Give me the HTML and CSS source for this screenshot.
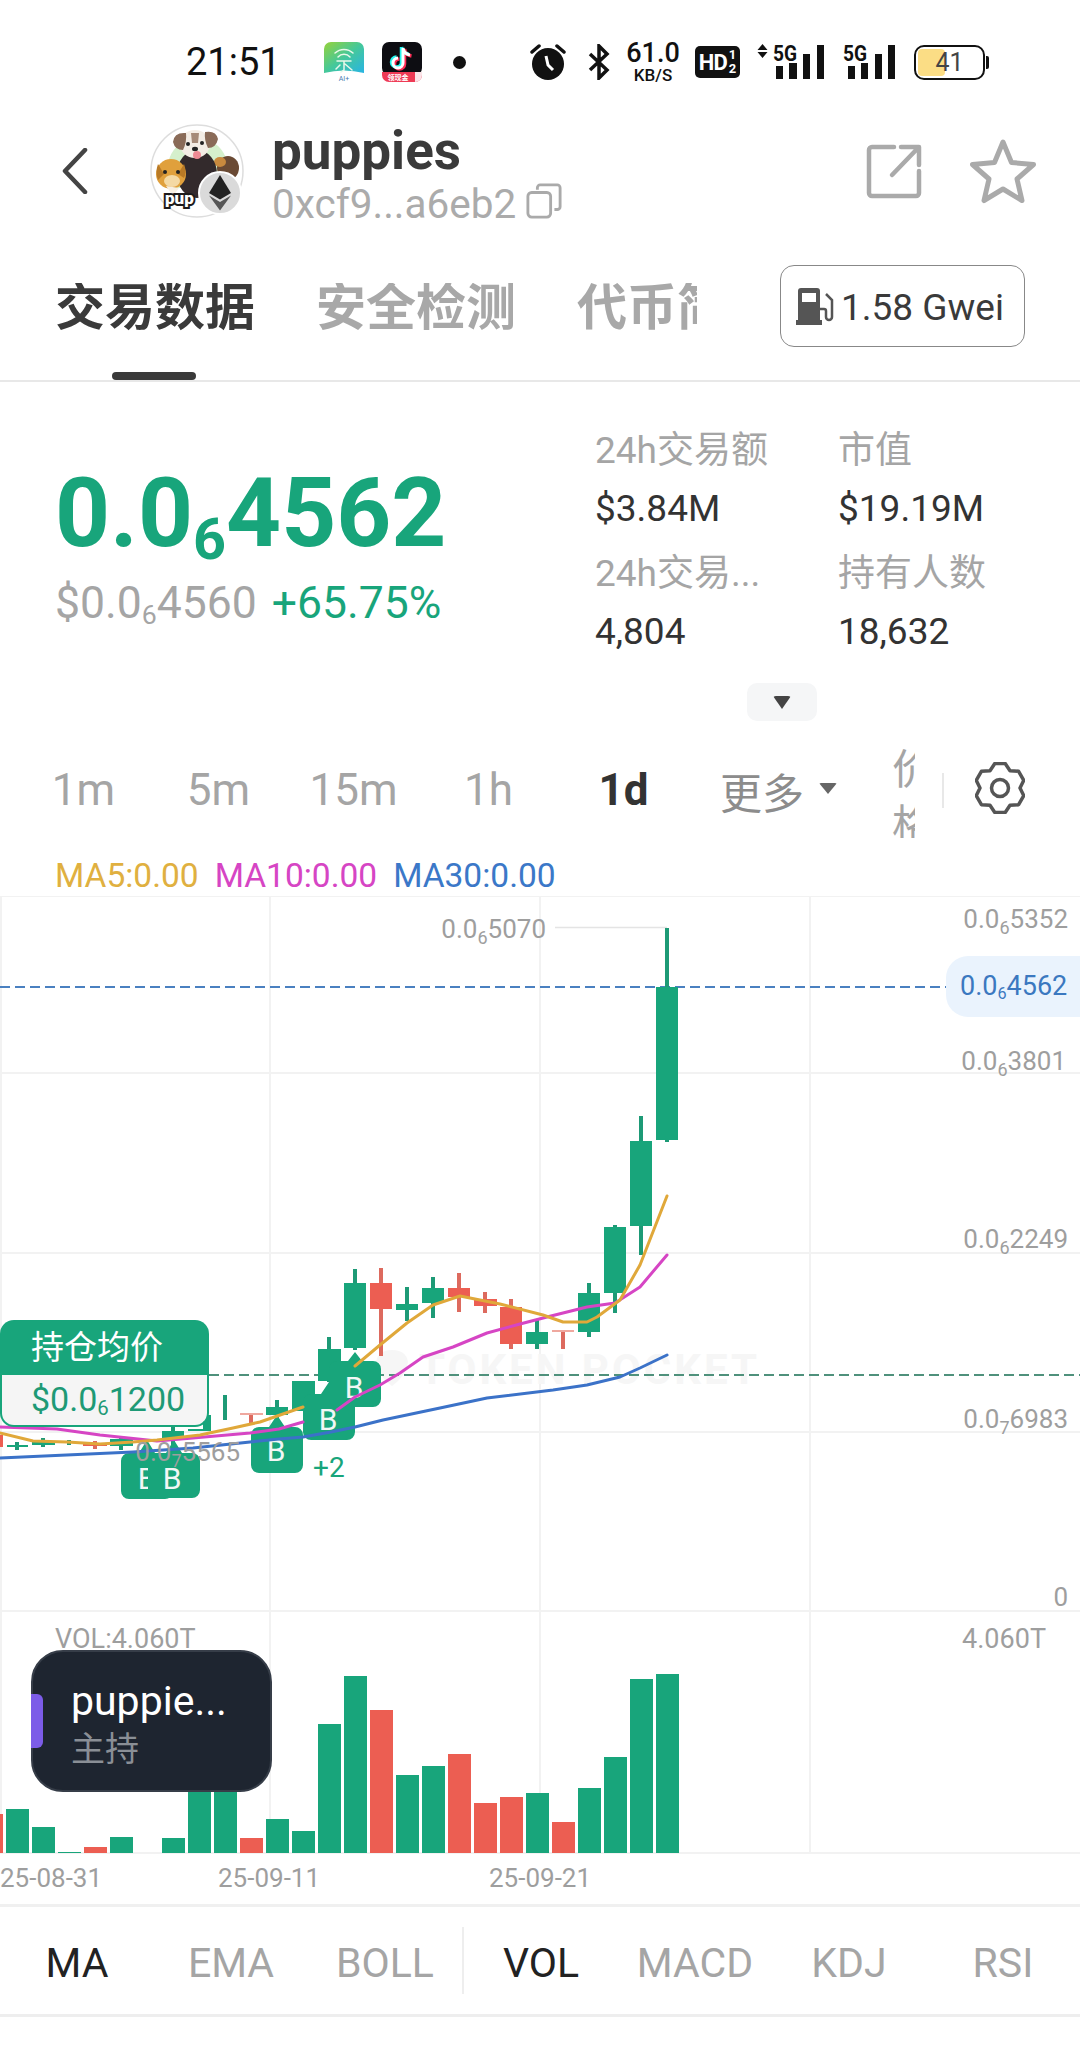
FILE: index.html
```html
<!DOCTYPE html>
<html lang="zh-CN">

<head>
    <meta charset="UTF-8">
    <meta name="viewport" content="width=device-width, initial-scale=1.0">
    <title>puppies</title>
    <link rel="stylesheet" href="styles.css">
</head>

<body>
    <!-- Status bar -->
    <div class="status-bar">
        <span class="clock">21:51</span>
        <svg class="app-icon app-one" viewBox="0 0 40 40">
            <defs>
                <linearGradient id="appGrad" x1="0" y1="0" x2="1" y2="1">
                    <stop offset="0" stop-color="#96d23a" />
                    <stop offset="0.5" stop-color="#45c89a" />
                    <stop offset="1" stop-color="#28b4e4" />
                </linearGradient>
            </defs>
            <path d="M7 0h26a7 7 0 0 1 7 7v24q-20 -5 -40 0V7a7 7 0 0 1 7 -7z" fill="url(#appGrad)" />
            <path d="M11 11a13 13 0 0 1 18 0M14 15a8 8 0 0 1 12 0M13 19h14M20 19v9l-3 2M16 23l-4 4M21 22l7 6" fill="none" stroke="#e9f8ea" stroke-width="1.500" stroke-linecap="round" />
            <text class="app-tag" x="20" y="38.500">AI+</text>
        </svg>
        <svg class="app-icon app-two" viewBox="0 0 40 40">
            <rect width="40" height="33" rx="7" fill="#0d0d12" />
            <path d="M0 30h40v3a7 7 0 0 1 -7 7H7a7 7 0 0 1 -7 -7z" fill="#ee3a55" />
            <path d="M33 30h7v3a7 7 0 0 1 -7 7z" fill="#fbe4e8" />
            <text class="app-label" x="16" y="38">领现金</text>
            <path d="M21 6v15a5 5 0 1 1 -5 -5M21 6q1 6 7 7" fill="none" stroke="#fe2c55" stroke-width="3.500" transform="translate(1.500 1)" />
            <path d="M21 6v15a5 5 0 1 1 -5 -5M21 6q1 6 7 7" fill="none" stroke="#25f4ee" stroke-width="3.500" transform="translate(-1.500 -1)" />
            <path d="M21 6v15a5 5 0 1 1 -5 -5M21 6q1 6 7 7" fill="none" stroke="#fff" stroke-width="3" />
        </svg>
        <span class="status-dot"></span>
        <svg class="sys-icon alarm" viewBox="0 0 36 38">
            <circle cx="18" cy="21" r="16" fill="#111" />
            <path d="M2 9l7 -6M34 9l-7 -6" stroke="#111" stroke-width="3.500" stroke-linecap="round" />
            <path d="M16 13l2 9l5 5" fill="none" stroke="#fff" stroke-width="3" />
        </svg>
        <svg class="sys-icon bluetooth" viewBox="0 0 24 36">
            <path d="M3 10l17 16l-8 8V2l8 8L3 26" fill="none" stroke="#111" stroke-width="3.500" />
        </svg>
        <div class="net-speed">
            <span class="net-value">61.0</span>
            <span class="net-unit">KB/S</span>
        </div>
        <div class="hd-badge">HD<span class="hd-sub">1<br>2</span></div>
        <svg class="signal signal-one" viewBox="0 0 67 38">
            <path d="M5.500 1l5 6h-10zM5.500 15l5 -6h-10z" fill="#111" />
            <text class="signal-label" x="16" y="18" textLength="24" lengthAdjust="spacingAndGlyphs">5G</text>
            <path d="M19 23h7v13h-7zM32 20h8v16h-8zM46 11h7v25h-7zM60 2h7v34h-7z" fill="#111" />
        </svg>
        <svg class="signal signal-two" viewBox="0 0 52 38">
            <text class="signal-label" x="0" y="18" textLength="24" lengthAdjust="spacingAndGlyphs">5G</text>
            <path d="M5 23h7v13H5zM18 20h7v16h-7zM32 11h7v25h-7zM45 2h7v34h-7z" fill="#111" />
        </svg>
        <div class="battery">
            <div class="battery-body">
                <span class="battery-fill"></span>
                <span class="battery-text">41</span>
            </div>
            <span class="battery-nub"></span>
        </div>
    </div>

    <!-- Token header -->
    <header class="token-head">
        <svg class="back-icon" viewBox="0 0 26 46">
            <path d="M23 2L3 23l20 21" fill="none" stroke="#444" stroke-width="4.500" stroke-linecap="round" stroke-linejoin="round" />
        </svg>
        <svg class="avatar" viewBox="0 0 94 94">
            <circle cx="47" cy="47" r="46" fill="#fff" stroke="#ddd" stroke-width="1.500" />
            <path d="M18 40a30 30 0 0 1 58 -6l-4 30H20z" fill="#d5f0cc" />
            <ellipse cx="78" cy="44" rx="11" ry="12" fill="#6a4a34" />
            <ellipse cx="70" cy="38" rx="6" ry="5" fill="#c98a3e" />
            <ellipse cx="47" cy="50" rx="20" ry="24" fill="#332a2c" />
            <ellipse cx="45" cy="20" rx="15" ry="14" fill="#f3ece4" />
            <path d="M36 9q-12 -1 -13 9q2 8 10 8q4 -8 3 -17zM55 8q11 -2 13 7q-2 9 -10 9q-4 -8 -3 -16z" fill="#8a6b58" />
            <path d="M41 9h8l-1 10h-6z" fill="#a58a78" />
            <circle cx="38" cy="20" r="2" fill="#222" />
            <circle cx="52" cy="19" r="2" fill="#222" />
            <ellipse cx="45" cy="25" rx="3" ry="2.200" fill="#222" />
            <ellipse cx="47" cy="31" rx="4" ry="4" fill="#ee8a94" />
            <ellipse cx="21" cy="50" rx="15" ry="15" fill="#e0a03c" />
            <path d="M8 40q-3 8 0 16l6 -6zM34 40q3 8 0 14l-6 -4z" fill="#b97a26" />
            <ellipse cx="22" cy="57" rx="8" ry="6" fill="#f4d9a4" />
            <circle cx="15" cy="48" r="2" fill="#222" />
            <circle cx="28" cy="48" r="2" fill="#222" />
            <path d="M16 62l7 10l6 -8z" fill="#f7efe2" />
            <text class="avatar-text" x="15" y="80">pup</text>
            <circle cx="70" cy="69" r="21" fill="#dadada" stroke="#fff" stroke-width="2" />
            <path d="M70 51l11 18l-11 6.500l-11 -6.500z" fill="#222" />
            <path d="M70 78l11 -6.500l-11 15l-11 -15z" fill="#555" />
        </svg>
        <div class="token-name">
            <h1>puppies</h1>
            <div class="token-address">
                <span>0xcf9...a6eb2</span>
                <svg class="copy-icon" viewBox="0 0 38 38">
                    <rect x="2" y="10" width="24" height="26" rx="4" fill="#fff" stroke="#aaa" stroke-width="3" />
                    <path d="M12 7V5a3 3 0 0 1 3 -3h18a3 3 0 0 1 3 3v20a3 3 0 0 1 -3 3h-3" fill="none" stroke="#aaa" stroke-width="3" />
                </svg>
            </div>
        </div>
        <svg class="share-icon" viewBox="0 0 56 56">
            <path d="M28 4H6a3 3 0 0 0 -3 3v43a3 3 0 0 0 3 3h44a3 3 0 0 0 3 -3V28M26 32L52 5M35 4h18v18" fill="none" stroke="#aaa" stroke-width="4.500" stroke-linecap="round" stroke-linejoin="round" />
        </svg>
        <svg class="star-icon" viewBox="0 0 66 66">
            <path d="M33 4l8.500 20.500l22 2l-16.500 14.500l5 21.500l-19 -11.500l-19 11.500l5 -21.500L2.500 26.500l22 -2z" fill="none" stroke="#aaa" stroke-width="5" stroke-linejoin="round" />
        </svg>
    </header>

    <!-- Tabs -->
    <nav class="tabs">
        <div class="tab-list">
            <span class="tab tab-active">交易数据</span>
            <span class="tab">安全检测</span>
            <span class="tab">代币简介</span>
        </div>
        <div class="gas-button">
            <svg class="gas-icon" viewBox="0 0 38 38">
                <path d="M2 4a3 3 0 0 1 3 -3h16a3 3 0 0 1 3 3v29H2z" fill="#555" />
                <rect x="6" y="6" width="14" height="9" fill="#fff" />
                <rect y="33" width="26" height="5" fill="#555" />
                <path d="M24 22h4a2 2 0 0 1 2 2v6a3 3 0 0 0 6 0V13l-6 -6" fill="none" stroke="#555" stroke-width="2.500" />
            </svg>
            <span class="gas-text">1.58 Gwei</span>
        </div>
        <span class="tab-indicator"></span>
    </nav>

    <!-- Price and stats -->
    <section class="market">
        <div class="price-block">
            <div class="price">0.0<sub>6</sub>4562</div>
            <div class="price-sub">
                <span class="price-usd">$0.0<sub>6</sub>4560</span>
                <span class="price-change">+65.75%</span>
            </div>
        </div>
        <div class="stats">
            <div class="stat">
                <span class="stat-label">24h交易额</span>
                <span class="stat-value">$3.84M</span>
            </div>
            <div class="stat">
                <span class="stat-label">市值</span>
                <span class="stat-value">$19.19M</span>
            </div>
            <div class="stat">
                <span class="stat-label">24h交易...</span>
                <span class="stat-value">4,804</span>
            </div>
            <div class="stat">
                <span class="stat-label">持有人数</span>
                <span class="stat-value">18,632</span>
            </div>
        </div>
    </section>
    <div class="expand-pill"><span class="arrow-down"></span></div>

    <!-- Period selector -->
    <div class="periods">
        <div class="period-list">
            <span class="period">1m</span>
            <span class="period">5m</span>
            <span class="period">15m</span>
            <span class="period">1h</span>
            <span class="period period-active">1d</span>
        </div>
        <div class="period-more">更多<span class="arrow-small"></span></div>
        <div class="period-clip">价格</div>
        <span class="period-divider"></span>
        <svg class="gear-icon" viewBox="0 0 50 52">
            <path d="M19.800 1.500H30.200L35 8.700L43.600 9.300L48.800 18.300L45 26L48.800 33.700L43.600 42.700L35 43.300L30.200 50.500H19.800L15 43.300L6.400 42.700L1.200 33.700L5 26L1.200 18.300L6.400 9.300L15 8.700z" fill="none" stroke="#555" stroke-width="3.500" stroke-linejoin="round" />
            <circle cx="25" cy="26" r="8.500" fill="none" stroke="#555" stroke-width="3.500" />
        </svg>
    </div>

    <div class="ma-legend">
        <span class="ma5">MA5:0.00</span>
        <span class="ma10">MA10:0.00</span>
        <span class="ma30">MA30:0.00</span>
    </div>

    <!-- Chart -->
    <section class="chart">
        <svg class="chart-canvas" viewBox="0 896 1080 1009" width="1080" height="1009">
            <!-- grid -->
            <path class="grid" d="M0 896H1080M0 1073H1080M0 1253H1080M0 1432H1080M0 1611H1080M0 1853H1080M1 896V1853M270 896V1853M540 896V1853M810 896V1853" />
            <path class="watermark-mark" d="M392 1350q14 0 16 12q-2 14 -16 24q-14 -10 -16 -24q2 -12 16 -12z" />
            <text class="watermark" x="419" y="1384">TOKEN POCKET</text>

            <!-- volume bars -->
            <path class="bar-up" d="M656 1674h23v179h-23zM630 1679h23v174h-23zM604 1757h23v96h-23zM578 1788h23v65h-23zM526 1793h23v60h-23zM422 1766h23v87h-23zM396 1775h23v78h-23zM344 1676h23v177h-23zM318 1724h23v129h-23zM292 1831h23v22h-23zM266 1819h23v34h-23zM214 1700h23v153h-23zM188 1700h23v153h-23zM162 1838h23v15h-23zM110 1837h23v16h-23zM58 1852h23v1h-23zM32 1827h23v26h-23zM6 1809h23v44h-23z" />
            <path class="bar-down" d="M552 1822h23v31h-23zM500 1797h23v56h-23zM474 1803h23v50h-23zM448 1754h23v99h-23zM370 1710h23v143h-23zM240 1838h23v15h-23zM84 1847h23v6h-23zM-20 1814h23v39h-23z" />

            <!-- reference lines -->
            <path class="leader" d="M555 927.500H667" />
            <path class="last-line" d="M0 987H946" />
            <path class="avg-line" d="M209 1375H1080" />

            <!-- candles -->
            <path class="wick-up" d="M667 928V1142M641 1116V1255M615 1225V1313M589 1283V1337M537 1319V1349M433 1277V1318M407 1287V1321M355 1269V1350M329 1337V1382M277 1400V1425M225 1395V1420M173 1425V1445M121 1436V1450M69 1440V1445M43 1438V1447M17 1442V1450" />
            <path class="body-up" d="M656 987h22v153h-22zM630 1141h22v85h-22zM604 1227h22v66h-22zM578 1293h22v39h-22zM526 1332h22v12h-22zM422 1288h22v15h-22zM396 1304h22v6h-22zM344 1283h22v65h-22zM318 1349h23v32h-23zM292 1381h23v30h-23zM266 1407h22v8h-22zM188 1429h23v2h-23zM203 1415h8v15h-8zM162 1431h22v7h-22zM110 1439h23v7h-23zM32 1442h23v3h-23zM7 1445h21v2h-21z" />
            <path class="wick-down" d="M563 1331V1349M511 1299V1349M485 1292V1313M459 1273V1312M381 1268V1356M251 1413V1423M95 1441V1449" />
            <path class="body-down" d="M500 1307h22v37h-22zM474 1299h23v7h-23zM448 1288h22v9h-22zM370 1283h22v26h-22zM83 1443h24v3h-24zM-10 1435h13v12h-13z" />
            <path class="doji-down" d="M552 1331H574M240 1414H263" />

            <!-- trade markers -->
            <path class="marker" d="M147 1440l8 13h10a8 8 0 0 1 8 8v30a8 8 0 0 1 -8 8H129a8 8 0 0 1 -8 -8v-30a8 8 0 0 1 8 -8h10z" />
            <text class="marker-text" x="147" y="1489">B</text>
            <path class="marker" d="M174 1440l8 13h10a8 8 0 0 1 8 8v29a8 8 0 0 1 -8 8H156a8 8 0 0 1 -8 -8v-29a8 8 0 0 1 8 -8h10z" />
            <text class="marker-text" x="172" y="1489">B</text>
            <path class="marker" d="M277 1415l8 12h10a8 8 0 0 1 8 8v30a8 8 0 0 1 -8 8H259a8 8 0 0 1 -8 -8v-30a8 8 0 0 1 8 -8h10z" />
            <text class="marker-text" x="276" y="1461">B</text>
            <path class="marker" d="M329 1382l8 12h10a8 8 0 0 1 8 8v30a8 8 0 0 1 -8 8H311a8 8 0 0 1 -8 -8v-30a8 8 0 0 1 8 -8h10z" />
            <text class="marker-text" x="328" y="1430">B</text>
            <path class="marker" d="M355 1352l7 9h11a8 8 0 0 1 8 8v30a8 8 0 0 1 -8 8H337a8 8 0 0 1 -8 -8v-30a8 8 0 0 1 8 -8h11z" />
            <text class="marker-text" x="354" y="1398">B</text>
            <text class="plus-more" x="313" y="1477">+2</text>

            <!-- moving averages -->
            <path class="line-ma30" d="M0 1458L133 1452L193 1448L250 1442L279 1439L303 1437L331 1432L355 1427L383 1420L440 1408L487 1398L553 1390L587 1385L620 1377L640 1368L667 1355" />
            <path class="line-ma10" d="M0 1427L57 1429L100 1435L157 1441L193 1438L250 1433L279 1429L303 1422M337 1410L355 1397L380 1385L400 1373L423 1357L453 1347L487 1333L520 1324L547 1317L587 1307L615 1303L640 1287L667 1255" />
            <path class="line-ma5" d="M0 1433L33 1441L67 1442L100 1444L133 1442L157 1440L200 1435L233 1428L260 1422L303 1407M355 1366L380 1345L407 1323L433 1305L460 1296L500 1304L543 1315L563 1322L587 1322L597 1317L620 1300L640 1265L667 1196" />

            <!-- price labels -->
            <text class="axis-label" x="1068" y="928">0.0<tspan class="axis-sub" dy="6">6</tspan><tspan dy="-6">5352</tspan></text>
            <text class="axis-label" x="1066" y="1070">0.0<tspan class="axis-sub" dy="6">6</tspan><tspan dy="-6">3801</tspan></text>
            <text class="axis-label" x="1068" y="1248">0.0<tspan class="axis-sub" dy="6">6</tspan><tspan dy="-6">2249</tspan></text>
            <text class="axis-label" x="1068" y="1428">0.0<tspan class="axis-sub" dy="6">7</tspan><tspan dy="-6">6983</tspan></text>
            <text class="axis-label" x="1068" y="1606">0</text>
            <text class="axis-label" x="546" y="938">0.0<tspan class="axis-sub" dy="6">6</tspan><tspan dy="-6">5070</tspan></text>
            <text class="axis-label" x="240" y="1461">0.0<tspan class="axis-sub" dy="6">7</tspan><tspan dy="-6">5565</tspan></text>
            <text class="axis-label vol-label" x="55" y="1648">VOL:4.060T</text>
            <text class="axis-label vol-value" x="1046" y="1648">4.060T</text>
            <text class="date-label" x="0" y="1887">25-08-31</text>
            <text class="date-label" x="218" y="1887">25-09-11</text>
            <text class="date-label" x="489" y="1887">25-09-21</text>
        </svg>

        <div class="last-price">0.0<sub>6</sub>4562</div>

        <div class="avg-cost">
            <div class="avg-title">持仓均价</div>
            <div class="avg-value">$0.0<sub>6</sub>1200</div>
        </div>

        <div class="speaker-card">
            <span class="speaker-mark"></span>
            <div class="speaker-name">puppie...</div>
            <div class="speaker-role">主持</div>
        </div>
    </section>

    <!-- Indicators -->
    <div class="indicators">
        <div class="indicator-group">
            <span class="indicator indicator-active">MA</span>
            <span class="indicator">EMA</span>
            <span class="indicator">BOLL</span>
        </div>
        <div class="indicator-group indicator-group-right">
            <span class="indicator indicator-active">VOL</span>
            <span class="indicator">MACD</span>
            <span class="indicator">KDJ</span>
            <span class="indicator">RSI</span>
        </div>
    </div>
</body>

</html>
```

FILE: styles.css
```css
/* General Styles */
body {
    margin: 0;
    width: 1080px;
    height: 2050px;
    overflow: hidden;
    background-color: #FFFFFF;
    color: #333333;
    font-family: Roboto, "Noto Sans CJK SC", sans-serif;
}

sub {
    vertical-align: baseline;
    position: relative;
    top: 0.22em;
    font-size: 0.6em;
}

/* Status bar */
.status-bar {
    height: 124px;
    display: flex;
    align-items: center;
    color: #111111;
}

.clock {
    margin-left: 186px;
    font-size: 38px;
    width: 138px;
}

.app-icon {
    width: 40px;
    height: 40px;
}

.app-tag {
    font-size: 7px;
    fill: #4A7AB0;
    text-anchor: middle;
}

.app-label {
    font-size: 7px;
    font-weight: 700;
    fill: #FFFFFF;
    text-anchor: middle;
}

.app-two {
    margin-left: 18px;
}

.status-dot {
    width: 13px;
    height: 13px;
    margin-left: 31px;
    border-radius: 50%;
    background-color: #111111;
}

.alarm {
    width: 36px;
    height: 38px;
    margin-left: 64px;
}

.bluetooth {
    width: 24px;
    height: 36px;
    margin-left: 21px;
}

.net-speed {
    width: 50px;
    margin-left: 17px;
    display: flex;
    flex-direction: column;
    align-items: center;
    line-height: 1;
}

.net-value {
    font-size: 27px;
    font-weight: 500;
}

.net-unit {
    font-size: 17px;
    font-weight: 500;
}

.hd-badge {
    width: 45px;
    height: 32px;
    margin-left: 17px;
    display: flex;
    align-items: center;
    justify-content: center;
    background-color: #111111;
    border-radius: 5px;
    color: #FFFFFF;
    font-size: 22px;
    font-weight: 700;
    letter-spacing: -1px;
}

.hd-sub {
    margin-left: 2px;
    font-size: 13px;
    line-height: 14px;
    letter-spacing: 0;
}

.signal {
    height: 38px;
    overflow: visible;
}

.signal-one {
    width: 67px;
    margin-left: 17px;
}

.signal-two {
    width: 52px;
    margin-left: 19px;
}

.signal-label {
    font-size: 22px;
    font-weight: 700;
    fill: #111111;
}

.battery {
    display: flex;
    align-items: center;
    margin-left: 19px;
}

.battery-body {
    position: relative;
    width: 71px;
    height: 35px;
    box-sizing: border-box;
    border: 2.5px solid #111111;
    border-radius: 10px;
    display: flex;
    align-items: center;
    justify-content: center;
    overflow: hidden;
}

.battery-fill {
    position: absolute;
    left: 2px;
    top: 2px;
    bottom: 2px;
    width: 27px;
    border-radius: 4px;
    background-color: #FBDD85;
}

.battery-text {
    position: relative;
    font-size: 25px;
    color: #444444;
}

.battery-nub {
    width: 3px;
    height: 13px;
    margin-left: 1px;
    border-radius: 0 2px 2px 0;
    background-color: #111111;
}

/* Token header */
.token-head {
    height: 94px;
    display: flex;
    align-items: center;
    position: relative;
}

.back-icon {
    width: 26px;
    height: 46px;
    margin-left: 62px;
}

.avatar {
    width: 94px;
    height: 94px;
    margin-left: 62px;
}

.avatar-text {
    font-size: 17px;
    font-weight: 900;
    fill: #FFFFFF;
    stroke: #1D1B1B;
    stroke-width: 4px;
    paint-order: stroke;
}

.token-name {
    margin-left: 28px;
    flex: 1;
}

.token-name h1 {
    margin: 0;
    font-size: 53px;
    font-weight: 700;
    line-height: 66px;
    color: #3A3A3A;
}

.token-address {
    display: flex;
    align-items: center;
    height: 40px;
    font-size: 40.5px;
    color: #ABABAB;
}

.copy-icon {
    width: 36px;
    height: 38px;
    margin-left: 10px;
    margin-top: -6px;
}

.share-icon {
    width: 56px;
    height: 56px;
}

.star-icon {
    width: 66px;
    height: 66px;
    margin-left: 48px;
    margin-right: 44px;
}

/* Tabs */
.tabs {
    position: relative;
    height: 164px;
    box-sizing: border-box;
    border-bottom: 2px solid #E8E8E8;
    display: flex;
    align-items: flex-start;
}

.tab-list {
    width: 697px;
    margin-top: 65px;
    padding-left: 55px;
    box-sizing: border-box;
    display: flex;
    gap: 61px;
    overflow: hidden;
    white-space: nowrap;
}

.tab {
    font-size: 50px;
    font-weight: 700;
    line-height: 50px;
    color: #A8A8A8;
}

.tab-active {
    color: #3A3A3A;
}

.tab-indicator {
    position: absolute;
    left: 112px;
    bottom: 0;
    width: 84px;
    height: 8px;
    border-radius: 4px;
    background-color: #3A3A3A;
}

.gas-button {
    margin-top: 47px;
    margin-left: 83px;
    width: 245px;
    height: 82px;
    box-sizing: border-box;
    border: 1.5px solid #888888;
    border-radius: 14px;
    display: flex;
    align-items: center;
    padding-left: 15px;
    font-size: 37px;
    color: #3A3A3A;
}

.gas-icon {
    width: 38px;
    height: 38px;
    margin-right: 7px;
}

.gas-text {
    padding-top: 3px;
}

/* Price and stats */
.market {
    display: flex;
    height: 278px;
}

.price-block {
    width: 595px;
    box-sizing: border-box;
    padding: 76px 0 0 55px;
}

.price {
    height: 110px;
    font-size: 96px;
    font-weight: 700;
    line-height: 110px;
    color: #18A57B;
    white-space: nowrap;
}

.price-sub {
    height: 70px;
    display: flex;
    gap: 15px;
    font-size: 44.5px;
    line-height: 70px;
    white-space: nowrap;
}

.price-usd {
    color: #A5A5A5;
}

.price-change {
    color: #18A57B;
}

.stats {
    padding-top: 40px;
    display: grid;
    grid-template-columns: 243px auto;
    grid-auto-rows: 116px;
    row-gap: 7px;
}

.stat {
    display: flex;
    flex-direction: column;
    line-height: 58px;
    font-size: 37px;
    white-space: nowrap;
}

.stat-label {
    color: #A5A5A5;
}

.stat-value {
    color: #333333;
}

.expand-pill {
    width: 70px;
    height: 38px;
    margin: 23px 0 0 747px;
    border-radius: 10px;
    background-color: #F5F6F7;
    display: flex;
    align-items: center;
    justify-content: center;
}

.arrow-down {
    border-left: 9px solid transparent;
    border-right: 9px solid transparent;
    border-top: 13px solid #444444;
    border-radius: 3px;
}

/* Period selector */
.periods {
    height: 138px;
    padding-left: 16px;
    display: flex;
    align-items: center;
    position: relative;
}

.period-list {
    display: grid;
    grid-template-columns: repeat(5, 135px);
    width: 675px;
}

.period {
    text-align: center;
    font-size: 44px;
    color: #A5A5A5;
}

.period-active {
    color: #333333;
    font-weight: 700;
}

.period-more {
    margin-left: 29px;
    width: 172px;
    display: flex;
    align-items: center;
    font-size: 42px;
    color: #8C8C8C;
}

.arrow-small {
    margin: 0 0 4px 15px;
    border-left: 9px solid transparent;
    border-right: 9px solid transparent;
    border-top: 11px solid #666666;
    border-radius: 2px;
}

.period-clip {
    width: 23px;
    height: 96px;
    overflow: hidden;
    font-size: 42px;
    line-height: 56px;
    color: #A5A5A5;
    word-break: break-all;
}

.period-divider {
    width: 2px;
    height: 35px;
    margin-left: 27px;
    background-color: #E8E8E8;
}

.gear-icon {
    width: 50px;
    height: 52px;
    margin-left: 31px;
    margin-top: -4px;
}

.ma-legend {
    height: 37px;
    padding-left: 55px;
    display: flex;
    gap: 16px;
    font-size: 33.5px;
    line-height: 34px;
    white-space: nowrap;
}

.ma5 {
    color: #E0B040;
}

.ma10 {
    color: #D645C4;
}

.ma30 {
    color: #3B78C8;
}

/* Chart */
.chart {
    position: relative;
    height: 1008px;
    overflow: hidden;
}

.chart-canvas {
    display: block;
}

.grid {
    fill: none;
    stroke: #F2F2F2;
    stroke-width: 2;
}

.watermark {
    font-size: 42px;
    font-weight: 700;
    letter-spacing: 3px;
    fill: #F6F6F6;
}

.watermark-mark {
    fill: #F6F6F6;
}

.bar-up,
.body-up,
.marker {
    fill: #18A57B;
}

.bar-down,
.body-down {
    fill: #EC5E52;
}

.wick-up {
    fill: none;
    stroke: #1D9A76;
    stroke-width: 4;
}

.wick-down {
    fill: none;
    stroke: #DD6A5E;
    stroke-width: 4;
}

.doji-down {
    fill: none;
    stroke: #EFA89F;
    stroke-width: 2;
}

.leader {
    fill: none;
    stroke: #E4E4E4;
    stroke-width: 1.5;
}

.last-line {
    fill: none;
    stroke: #4A80C0;
    stroke-width: 2;
    stroke-dasharray: 10 5;
}

.avg-line {
    fill: none;
    stroke: #4F917C;
    stroke-width: 2;
    stroke-dasharray: 10 5;
}

.marker-text {
    font-size: 30px;
    fill: #F2F7F5;
    text-anchor: middle;
}

.plus-more {
    font-size: 28px;
    fill: #18A57B;
}

.line-ma5,
.line-ma10,
.line-ma30 {
    fill: none;
    stroke-width: 3;
    stroke-linejoin: round;
    stroke-linecap: round;
}

.line-ma5 {
    stroke: #E0A83A;
}

.line-ma10 {
    stroke: #D645C4;
}

.line-ma30 {
    stroke: #3B72C8;
}

.axis-label {
    font-size: 26px;
    fill: #9E9E9E;
    text-anchor: end;
}

.axis-sub {
    font-size: 18px;
}

.vol-label {
    font-size: 27px;
    text-anchor: start;
}

.vol-value {
    font-size: 27px;
}

.date-label {
    font-size: 26px;
    fill: #9E9E9E;
}

.last-price {
    position: absolute;
    top: 60px;
    left: 946px;
    width: 134px;
    height: 61px;
    box-sizing: border-box;
    padding-left: 14px;
    border-radius: 22px 0 0 22px;
    background-color: #EAF3FD;
    font-size: 27px;
    line-height: 61px;
    color: #3B78C0;
    white-space: nowrap;
}

.avg-cost {
    position: absolute;
    top: 424px;
    left: 0;
    width: 209px;
}

.avg-title {
    height: 55px;
    padding-left: 31px;
    border-radius: 14px 14px 0 0;
    background-color: #18A57B;
    font-size: 33px;
    line-height: 55px;
    color: #FFFFFF;
}

.avg-value {
    height: 52px;
    box-sizing: border-box;
    padding-left: 29px;
    border: 2px solid #18A57B;
    border-top: 0;
    border-radius: 0 0 14px 14px;
    background-color: #F5F5F5;
    font-size: 34px;
    line-height: 48px;
    color: #1E9A76;
}

.speaker-card {
    position: absolute;
    top: 754px;
    left: 31px;
    width: 241px;
    height: 142px;
    box-sizing: border-box;
    padding: 26px 0 0 38px;
    border: 2px solid #363D48;
    border-radius: 32px;
    background-color: #1E2530;
}

.speaker-mark {
    position: absolute;
    left: -2px;
    top: 42px;
    width: 12px;
    height: 54px;
    border-radius: 0 6px 6px 0;
    background-color: #7C5CE8;
}

.speaker-name {
    font-size: 41px;
    line-height: 46px;
    color: #FFFFFF;
}

.speaker-role {
    font-size: 34px;
    line-height: 50px;
    color: #8A8F96;
}

/* Indicators */
.indicators {
    height: 113px;
    box-sizing: border-box;
    border-top: 3px solid #F0F0F0;
    border-bottom: 3px solid #EEEEEE;
    display: flex;
    align-items: center;
}

.indicator-group {
    display: grid;
    grid-auto-flow: column;
    grid-auto-columns: 154px;
    height: 67px;
    align-items: center;
}

.indicator-group-right {
    border-left: 2px solid #EEEEEE;
}

.indicator {
    margin-top: 5px;
    text-align: center;
    font-size: 41px;
    color: #A5A5A5;
}

.indicator-active {
    color: #222222;
}
```
